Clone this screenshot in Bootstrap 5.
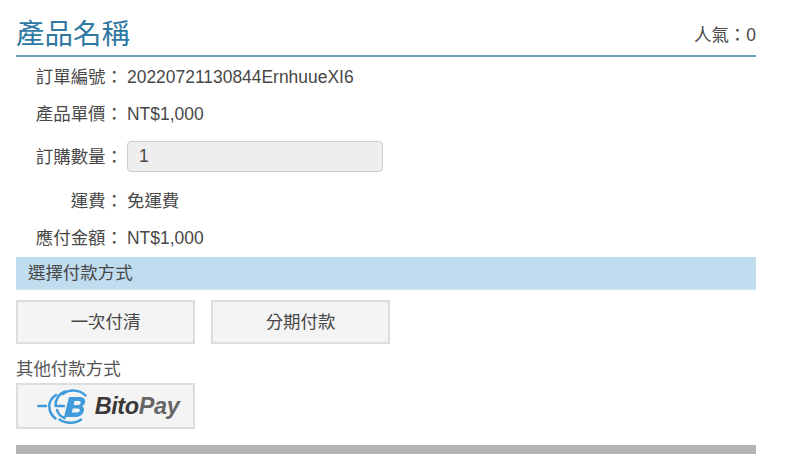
<!doctype html>
<html lang="zh-Hant">
<head>
<meta charset="utf-8">
<title>訂單</title>
<link href="https://cdn.jsdelivr.net/npm/bootstrap@5.3.0/dist/css/bootstrap.min.css" rel="stylesheet">
<style>
html,body{height:454px;overflow:hidden}
body{background:#fff;color:#484848;font-family:"Liberation Sans","Noto Sans CJK TC",sans-serif;font-size:17.45px;line-height:20px}
.page-wrap{width:740px;margin-left:16px}
.title-bar{height:42px;margin-top:15px;margin-bottom:1px;border-bottom:2px solid #6a9fbc}
.title-text{color:#2f78a3;font-size:28.5px;line-height:38px;font-weight:400}
.pop-text{line-height:20px;padding-top:10px}
.info-row{height:37px}
.info-row.qty-row{height:50px}
.info-label{width:107px;text-align:right;margin-right:4px;flex:none}
.qty-box{width:256px;height:31px;background:#eee;border:1px solid #ccc;border-radius:4px;padding-left:11px;line-height:29px;margin-bottom:2px}
.section-bar{height:33px;background:#c0ddf0;padding-left:12px;line-height:32px;border-bottom:1px solid #cfe3f1;margin-top:1px}
.pay-row{gap:16px;margin-top:10px}
.pay-btn{width:179px;height:44px;background:#f4f4f4;border:2px solid #ddd;display:flex;align-items:center;justify-content:center}
.logo-btn{height:46px;padding-left:4px}
.other-label{margin-top:15px;margin-bottom:4px;line-height:20px;color:#555}
.logo-text{font-family:"Liberation Sans",sans-serif;font-weight:700;font-style:italic;font-size:23.5px;letter-spacing:-.4px;color:#3a3838;line-height:1;padding-top:2px}
.logo-text span{color:#666}
.foot-bar{height:20px;background:#b3b3b3;margin-top:16px}
</style>
</head>
<body>
<div class="page-wrap">
  <div class="title-bar d-flex justify-content-between">
    <div class="title-text">產品名稱</div>
    <div class="pop-text">人氣：0</div>
  </div>
  <div class="info-row d-flex align-items-center"><div class="info-label">訂單編號：</div><div>20220721130844ErnhuueXI6</div></div>
  <div class="info-row d-flex align-items-center"><div class="info-label">產品單價：</div><div>NT$1,000</div></div>
  <div class="info-row qty-row d-flex align-items-center"><div class="info-label">訂購數量：</div><div class="qty-box">1</div></div>
  <div class="info-row d-flex align-items-center"><div class="info-label">運費：</div><div>免運費</div></div>
  <div class="info-row d-flex align-items-center"><div class="info-label">應付金額：</div><div>NT$1,000</div></div>
  <div class="section-bar">選擇付款方式</div>
  <div class="pay-row d-flex">
    <div class="pay-btn">一次付清</div>
    <div class="pay-btn">分期付款</div>
  </div>
  <div class="other-label">其他付款方式</div>
  <div class="pay-btn logo-btn">
    <svg width="51" height="38" viewBox="0 0 51 38" fill="none" aria-hidden="true">
      <g stroke="#3f9bdc" stroke-width="2.500" stroke-linecap="round">
        <path d="M2.500 19H10"/>
        <path d="M20 8C15.500 11 13.300 15 13.300 19c0 5 2.200 9.500 6.200 12.500"/>
        <path d="M29 4.500C23 7 19.500 12 19.500 19"/>
        <path d="M27 7C33 2 44 2.500 49.500 8.500"/>
        <path d="M23.500 32.500C30 37 40 36.500 45 32.500"/>
        <path d="M21 23c1 3.500 3.500 6.500 7.500 8"/>
        <path d="M21 19h7"/>
      </g>
      <path fill="#3f9bdc" fill-rule="evenodd" d="M33 10h10c4.500 0 6.800 2.200 6.100 5.400-.4 1.800-1.700 3.100-3.400 3.700 1.800.7 2.700 2.300 2.200 4.400-.8 4-4 6.500-8.500 6.500H28zm5.500 4-.9 4h4.500c1.400 0 2.400-.6 2.600-1.900.2-1.300-.6-2.100-2-2.100zm-1.700 7.600-.9 4h5c1.600 0 2.700-.7 2.900-2 .2-1.300-.7-2-2.100-2z"/>
    </svg>
    <div class="logo-text ms-2">Bito<span>Pay</span></div>
  </div>
  <div class="foot-bar"></div>
</div>
<script src="https://cdn.jsdelivr.net/npm/bootstrap@5.3.0/dist/js/bootstrap.bundle.min.js"></script>
</body>
</html>
